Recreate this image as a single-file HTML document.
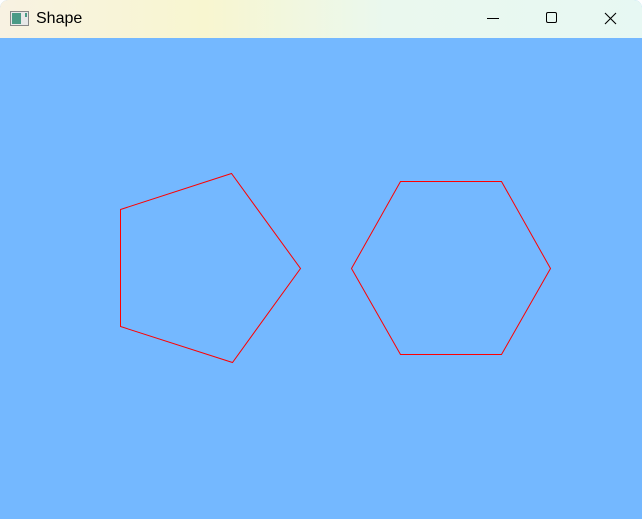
<!DOCTYPE html>
<html><head><style>
html,body{margin:0;padding:0;width:642px;height:519px;overflow:hidden;background:#fff;}
.win{position:absolute;left:0;top:0;width:642px;height:519px;border-radius:8px 8px 0 0;overflow:hidden;background:#74b8ff;}
.tb{position:absolute;left:0;top:0;width:642px;height:38px;background:linear-gradient(90deg,#f8f2e2 0%,#f8f6d0 32%,#eaf8ee 60%,#e7f8f3 100%);}
.t{position:absolute;left:36px;top:10px;font:16px "Liberation Sans",sans-serif;color:#000;}
</style></head><body>
<div class="win">
<div class="tb">
<svg width="642" height="38" style="position:absolute;left:0;top:0">
<rect x="10.5" y="11.5" width="18" height="14" fill="#e8e8e8" stroke="#888"/>
<rect x="12" y="13" width="9" height="11" fill="#4a9a86"/>
<rect x="25" y="13" width="2" height="4" fill="#4a9a86"/>
<line x1="487" y1="18.5" x2="499" y2="18.5" stroke="#000" stroke-width="1"/>
<rect x="546.5" y="12.5" width="10" height="10" rx="1.5" fill="none" stroke="#000" stroke-width="1"/>
<path d="M605 13 L616 24 M616 13 L605 24" stroke="#000" stroke-width="1.1"/>
</svg>
<div class="t">Shape</div>
</div>
<svg width="642" height="519" style="position:absolute;left:0;top:0">
<polygon points="120.5,209.5 231.5,173.5 300.5,268.5 232.5,362.5 120.5,326.5" fill="none" stroke="#ff0000" stroke-width="1"/>
<polygon points="400.5,181.5 501.5,181.5 550.5,268.5 501.5,354.5 400.5,354.5 351.5,268.5" fill="none" stroke="#ff0000" stroke-width="1"/>
</svg>
</div>
</body></html>
